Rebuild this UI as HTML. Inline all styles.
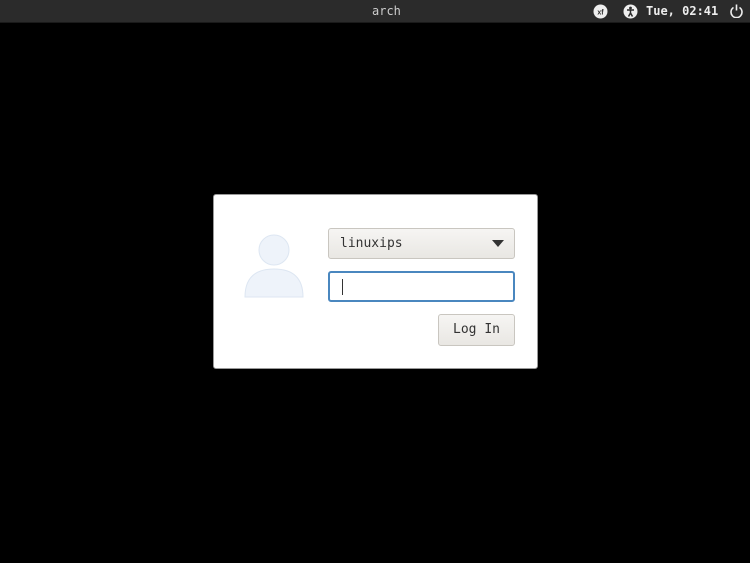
<!DOCTYPE html><html><head><style>
body{margin:0;width:750px;height:563px;background:#000;position:relative;overflow:hidden;font-family:"DejaVu Sans Mono","Liberation Mono",monospace}
.bar{position:absolute;left:0;top:0;width:750px;height:22px;background:#2b2b2b;border-bottom:1px solid #1a1a1a;color:#ddd;font-size:12px}
.dlg{position:absolute;left:213px;top:194px;width:323px;height:173px;background:#fff;border:1px solid #999;border-radius:3px}
.dd{position:absolute;left:114px;top:33px;width:185px;height:29px;border:1px solid #c9c6c0;border-radius:3px;background:linear-gradient(#f6f5f3,#e9e7e3);font-size:13px;color:#333}
.in{position:absolute;left:114px;top:76px;width:183px;height:27px;border:2px solid #4a87bf;border-radius:3px;background:#fff}
.btn{position:absolute;left:224px;top:119px;width:75px;height:30px;border:1px solid #c9c6c0;border-radius:3px;background:linear-gradient(#f6f5f3,#e9e7e3);font-size:13px;color:#333;text-align:center;line-height:30px}
</style></head><body>
<div class="bar"><span style="position:absolute;left:372px;top:4px;color:#ccc">arch</span>
<svg style="position:absolute;left:593px;top:4px" width="15" height="15"><circle cx="7.5" cy="7.5" r="7" fill="#eee"/><text x="7.5" y="10.5" font-size="7" font-weight="bold" text-anchor="middle" fill="#2b2b2b" font-family="Liberation Sans">xf</text></svg>
<svg style="position:absolute;left:623px;top:4px" width="15" height="15"><circle cx="7.5" cy="7.5" r="7" fill="#eee"/><circle cx="7.5" cy="4" r="1.4" fill="#2b2b2b"/><path d="M4 6h7M7.5 6v3M7.5 9l-2 3.5M7.5 9l2 3.5" stroke="#2b2b2b" stroke-width="1.5" fill="none"/></svg>
<span style="position:absolute;left:646px;top:4px;font-weight:bold;color:#eee">Tue, 02:41</span>
<svg style="position:absolute;left:729px;top:3px" width="15" height="15"><path d="M4.5 4.5A5.5 5.5 0 1 0 10.5 4.5" stroke="#eee" stroke-width="1.6" fill="none"/><path d="M7.5 1.5v6" stroke="#eee" stroke-width="1.6"/></svg>
</div>
<div class="dlg">
<svg style="position:absolute;left:30px;top:38px" width="60" height="66"><circle cx="30" cy="17" r="15" fill="#eef3fa" stroke="#dde6f2"/><path d="M1 64Q1 36 30 36Q59 36 59 64Z" fill="#eef3fa" stroke="#dde6f2"/></svg>
<div class="dd"><span style="position:absolute;left:11px;top:7px">linuxips</span><svg style="position:absolute;left:163px;top:11px" width="12" height="7"><path d="M0 0h12L6 7Z" fill="#333"/></svg></div>
<div class="in"><div style="position:absolute;left:12px;top:6px;width:1px;height:16px;background:#333"></div></div>
<div class="btn">Log In</div>
</div>
</body></html>
